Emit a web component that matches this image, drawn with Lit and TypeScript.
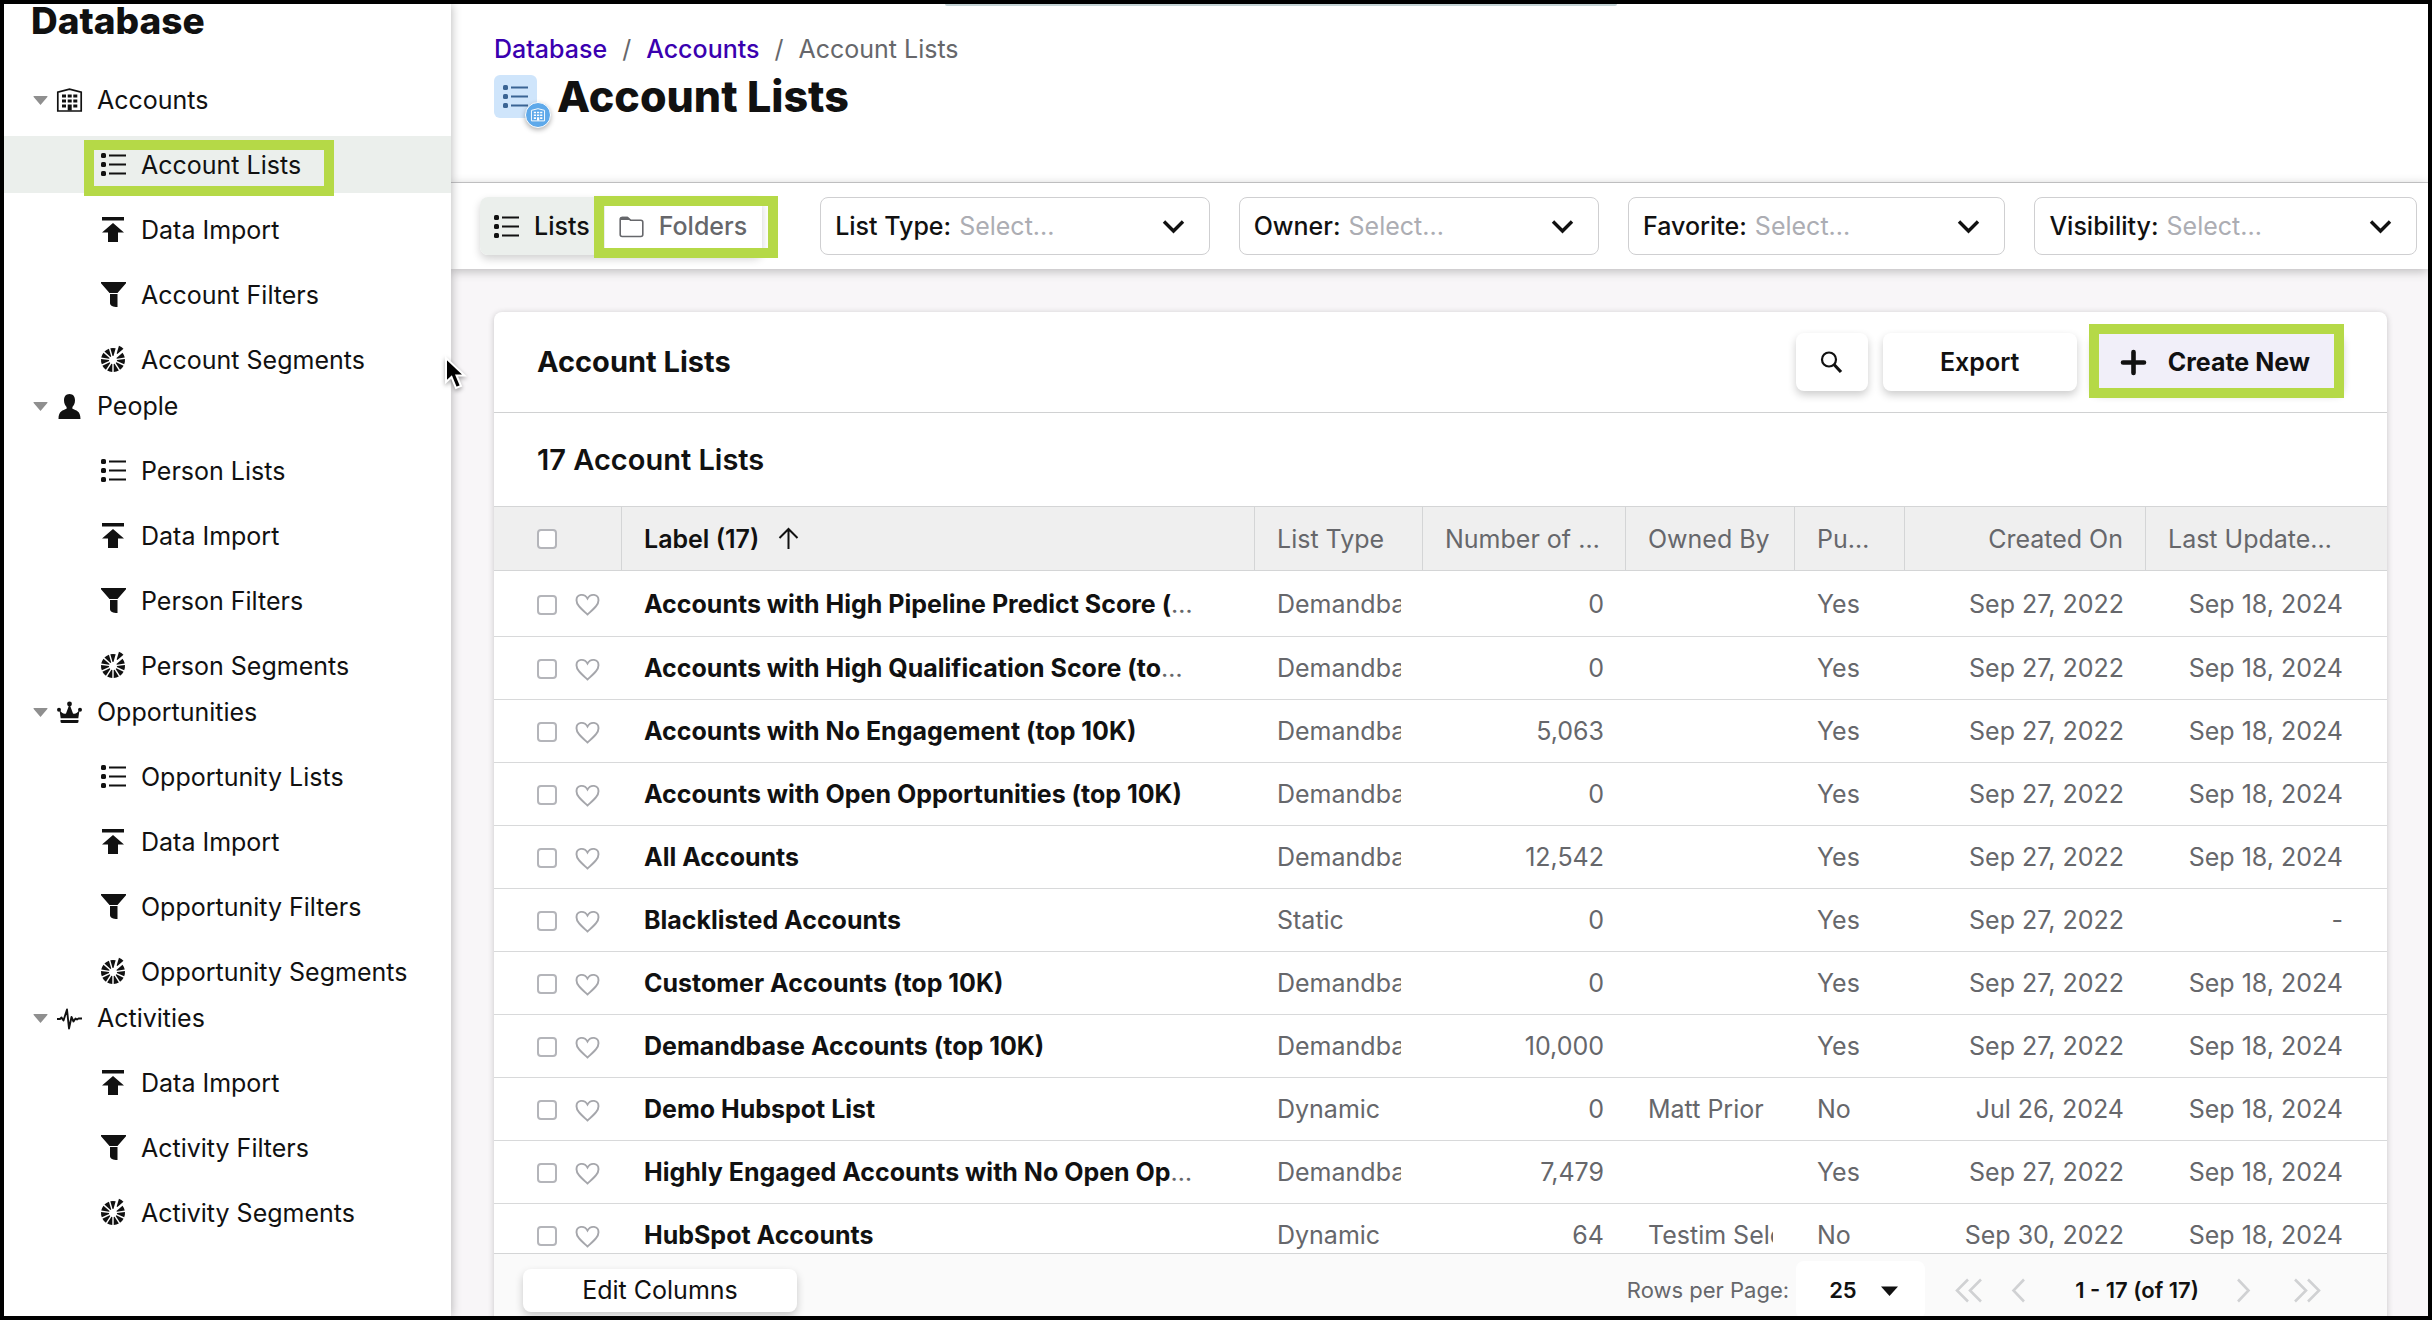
import { LitElement, html, css, svg, nothing } from "lit";
import { customElement, property } from "lit/decorators.js";
import { classMap } from "lit/directives/class-map.js";

type IconName = keyof typeof icons;

const wedges = Array.from({ length: 11 }, (_, i) => {
  const step = (Math.PI * 2) / 11;
  const mid = i * step;
  const half = step / 2 - 0.06;
  const shift = i === 1 ? 3.5 : 0;
  const cx = 12 + Math.sin(mid) * shift;
  const cy = 13 - Math.cos(mid) * shift;
  const point = (r: number, a: number) =>
    `${(cx + r * Math.sin(a)).toFixed(2)} ${(cy - r * Math.cos(a)).toFixed(2)}`;
  return `M${point(4, mid - half / 2)}L${point(12, mid - half)}A12 12 0 0 1 ${point(12, mid + half)}L${point(4, mid + half / 2)}Z`;
}).join("");

const icons = {
  list: svg`<path d="M8 3.5H25M8 12.5H25M8 21.5H25" stroke="currentColor" stroke-width="1.8"/>
    <g fill="currentColor"><rect y="1" width="5" height="5" rx="1.6"/><rect y="10" width="5" height="5" rx="1.6"/><rect y="19" width="5" height="5" rx="1.6"/></g>`,
  upload: svg`<path fill="currentColor" d="M1 0H23V3.5H1ZM12 6L23 15.5H17V25H7V15.5H1Z"/>`,
  funnel: svg`<path fill="currentColor" d="M0 0H25V1.2L16.5 11H8.5L0 1.2ZM9 12H16.5V25C12 25 9 23.6 9 21Z"/>`,
  segments: svg`<path fill="currentColor" d=${wedges}/>`,
  building: svg`<path d="M.8 23V4.2L12.5 1.2L24.2 4.2V23Z" fill="none" stroke="currentColor" stroke-width="1.7"/>
    <path fill="currentColor" d="M5 6.5h4v3H5zM10.7 6.5h4v3h-4zM16.3 6.5h4v3h-4zM5 11.5h4v3H5zM10.7 11.5h4v3h-4zM16.3 11.5h4v3h-4zM5 16.5h4v3H5zM16.3 16.5h4v3h-4zM10.7 16.5h4v6h-4z"/>`,
  person: svg`<path fill="currentColor" d="M12.5 0C16.3 0 18 2.8 18 6.2C18 9.5 16.8 11.6 15.4 13V14.8C19 16.6 23.5 16.8 23.5 25H1.5C1.5 16.8 6 16.6 9.6 14.8V13C8.2 11.6 7 9.5 7 6.2C7 2.8 8.7 0 12.5 0Z"/>`,
  crown: svg`<g fill="currentColor"><circle cx="12.5" cy="4" r="2.4"/><circle cx="2" cy="9.8" r="2"/><circle cx="23" cy="9.8" r="2"/>
    <path d="M12.5 4L16 13.5Q19.5 14.5 22.5 10L21.3 18.3H3.7L2.5 10Q5.5 14.5 9 13.5ZM3.5 20H21.5V21.5Q21.5 23 20 23H5Q3.5 23 3.5 21.5Z"/></g>`,
  pulse: svg`<path d="M0 13H3L4.5 11.5L6.5 14.5L10 3.5L12 22.5L14.5 11L16.5 15.5L18.5 12.5L20 13.5L21.5 12.5H25" fill="none" stroke="currentColor" stroke-width="1.9" stroke-linejoin="round"/>`,
  folder: svg`<path d="M1.2 20V5.5Q1.2 3.5 3 3.5H8.5L11.5 6.2H21.8Q23.8 6.2 23.8 8.2V20.5Q23.8 22.5 21.8 22.5H3.2Q1.2 22.5 1.2 20.5Z" fill="none" stroke="currentColor" stroke-width="1.6"/><path d="M1.2 6V4.5Q1.2 2.8 3 2.8H8.5L11.5 6Z" fill="currentColor"/>`,
  search: svg`<circle cx="10" cy="9.5" r="7" fill="none" stroke="currentColor" stroke-width="2.2"/><path d="M15 14.5L22 22" stroke="currentColor" stroke-width="3.2"/>`,
  plus: svg`<path d="M12.5 2V23M2 12.5H23" stroke="currentColor" stroke-width="4.6" stroke-linecap="round"/>`,
  chevron: svg`<path d="M3 7.5L12.5 17L22 7.5" fill="none" stroke="currentColor" stroke-width="3.4"/>`,
  caret: svg`<path d="M5.5 8H19.5Q19.5 9 18.7 9.8L12.5 17L6.3 9.8Q5.5 9 5.5 8Z" fill="currentColor"/>`,
  triangle: svg`<path d="M4 8.5H21L12.5 18Z" fill="currentColor"/>`,
  arrowUp: svg`<path d="M12.5 23V3M3.5 12L12.5 3L21.5 12" fill="none" stroke="currentColor" stroke-width="2"/>`,
  heart: svg`<path d="M12.5 22.5C6 16.5 1.5 13 1.5 8.2C1.5 1.8 9.5 1 12.5 6.6C15.5 1 23.5 1.8 23.5 8.2C23.5 13 19 16.5 12.5 22.5Z" fill="none" stroke="currentColor" stroke-width="1.9"/>`,
  first: svg`<path d="M12 1.5L1 12.5L12 23.5M25 1.5L14 12.5L25 23.5" fill="none" stroke="currentColor" stroke-width="2.6"/>`,
  prev: svg`<path d="M18 1.5L7.5 12.5L18 23.5" fill="none" stroke="currentColor" stroke-width="2.6"/>`,
  next: svg`<path d="M7 1.5L17.5 12.5L7 23.5" fill="none" stroke="currentColor" stroke-width="2.6"/>`,
  last: svg`<path d="M0 1.5L11 12.5L0 23.5M13 1.5L24 12.5L13 23.5" fill="none" stroke="currentColor" stroke-width="2.6"/>`,
};

@customElement("ui-icon")
export class UiIcon extends LitElement {
  static styles = css`
    :host { display: block; flex: none; width: 25px; height: 25px; }
    svg { display: block; width: 100%; height: 100%; overflow: visible; }
  `;
  @property() name: IconName = "list";
  render() {
    return html`<svg viewBox="0 0 25 25" aria-hidden="true">${icons[this.name]}</svg>`;
  }
}

interface NavGroup { icon: IconName; label: string; items: [IconName, string][]; }

const groupOf = (icon: IconName, label: string, noun: string, lists = true): NavGroup => ({
  icon,
  label,
  items: [
    ...(lists ? [["list", `${noun} Lists`] as [IconName, string]] : []),
    ["upload", "Data Import"],
    ["funnel", `${noun} Filters`],
    ["segments", `${noun} Segments`],
  ],
});

const navGroups: NavGroup[] = [
  groupOf("building", "Accounts", "Account"),
  groupOf("person", "People", "Person"),
  groupOf("crown", "Opportunities", "Opportunity"),
  groupOf("pulse", "Activities", "Activity", false),
];

@customElement("side-nav")
export class SideNav extends LitElement {
  static styles = css`
    :host { display: block; color: #111; font-size: 25px; line-height: 36px; }
    .title { margin: -6px 0 0; padding: 0 27px; font-size: 37px; line-height: 46px; font-weight: 800; }
    .groups { padding-top: 38px; }
    .head { display: flex; align-items: center; gap: 15px; width: 100%; height: 36px; padding: 0 0 0 24px; border: 0; background: none; font: inherit; color: inherit; text-align: left; }
    .head .caret { color: #8f8f8f; margin-right: -11px; }
    .items { list-style: none; margin: 0; padding: 18px 0 0; display: grid; gap: 8px; }
    .item { position: relative; }
    .link { display: flex; align-items: center; gap: 15px; height: 57px; padding-left: 97px; color: inherit; text-decoration: none; }
    .link.active { background: #ebefec; }
    .mark { position: absolute; inset: 4px auto -3px 80px; width: 230px; border: 10px solid #b5d947; pointer-events: none; }
  `;
  render() {
    return html`
      <h2 class="title">Database</h2>
      <nav class="groups" aria-label="Database">
        ${navGroups.map((group) => html`
          <section>
            <button class="head" type="button" aria-expanded="true">
              <ui-icon class="caret" name="caret"></ui-icon>
              <ui-icon name=${group.icon}></ui-icon>
              <span>${group.label}</span>
            </button>
            <ul class="items">
              ${group.items.map(([icon, label]) => {
                const active = label === "Account Lists";
                return html`<li class="item">
                  <a href="#" class=${classMap({ link: true, active })}><ui-icon name=${icon}></ui-icon><span>${label}</span></a>
                  ${active ? html`<span class="mark"></span>` : nothing}
                </li>`;
              })}
            </ul>
          </section>`)}
      </nav>`;
  }
}

@customElement("filter-bar")
export class FilterBar extends LitElement {
  static styles = css`
    :host { display: flex; gap: 29px; padding: 14px 11px 14px 29px; background: #fff; font-size: 25px; line-height: 36px; color: #111; }
    .tabs { position: relative; display: flex; flex: none; margin-right: 29px; border-radius: 8px; box-shadow: 0 4px 8px rgba(0, 0, 0, 0.18); }
    .tab { display: flex; align-items: center; gap: 15px; height: 58px; padding: 0 15px 0 14px; border: 0; border-radius: 0 8px 8px 0; background: #fff; font: inherit; font-weight: 500; color: #66676b; }
    .tab.on { background: #ebefec; color: #111; border-radius: 8px 0 0 8px; }
    .mark { position: absolute; inset: -1px -16px -3px auto; width: 164px; border: 10px solid #b5d947; pointer-events: none; }
    .filter { display: flex; flex: 1 1 auto; align-items: center; box-sizing: border-box; height: 58px; padding-left: 14px; border: 1px solid #cfcfd1; border-radius: 8px; }
    .filter label { font-weight: 500; white-space: nowrap; }
    .pick { display: grid; flex: 1 1 250px; align-items: center; }
    .pick > * { grid-area: 1 / 1; }
    .pick ui-icon { justify-self: end; margin-right: 23px; pointer-events: none; }
    select { appearance: none; width: 100%; height: 56px; padding: 0 56px 0 8px; border: 0; background: none; font: inherit; color: #acadb3; }
  `;
  render() {
    return html`
      <div class="tabs">
        <button class="tab on" type="button"><ui-icon name="list"></ui-icon><span>Lists</span></button>
        <button class="tab" type="button"><ui-icon name="folder"></ui-icon><span>Folders</span></button>
        <span class="mark"></span>
      </div>
      ${["List Type", "Owner", "Favorite", "Visibility"].map((name, i) => html`
        <div class="filter">
          <label for="filter-${i}">${name}:</label>
          <div class="pick">
            <select id="filter-${i}"><option>Select...</option></select>
            <ui-icon name="chevron"></ui-icon>
          </div>
        </div>`)}`;
  }
}

interface Row { label: string; type: string; count: string; owner: string; pub: string; created: string; updated: string; }

const row = (label: string, count: string, extra: Partial<Row> = {}): Row => ({
  label, count, type: "Demandbase", owner: "", pub: "Yes", created: "Sep 27, 2022", updated: "Sep 18, 2024", ...extra,
});

const rows: Row[] = [
  row("Accounts with High Pipeline Predict Score (top 10K)", "0"),
  row("Accounts with High Qualification Score (top 10K)", "0"),
  row("Accounts with No Engagement (top 10K)", "5,063"),
  row("Accounts with Open Opportunities (top 10K)", "0"),
  row("All Accounts", "12,542"),
  row("Blacklisted Accounts", "0", { type: "Static", updated: "-" }),
  row("Customer Accounts (top 10K)", "0"),
  row("Demandbase Accounts (top 10K)", "10,000"),
  row("Demo Hubspot List", "0", { type: "Dynamic", owner: "Matt Prior", pub: "No", created: "Jul 26, 2024" }),
  row("Highly Engaged Accounts with No Open Opportunities", "7,479"),
  row("HubSpot Accounts", "64", { type: "Dynamic", owner: "Testim Sele", pub: "No", created: "Sep 30, 2022" }),
];

@customElement("list-table")
export class ListTable extends LitElement {
  static styles = css`
    :host { display: block; font-size: 25px; line-height: 36px; color: #66676b; }
    table { width: 100%; table-layout: fixed; border-collapse: separate; border-spacing: 0; }
    th { box-sizing: border-box; height: 65px; padding: 0 22px; font-weight: 400; text-align: left; background: #efefef; border: solid #d4d5d6; border-width: 1px 0 1px 1px; }
    th:first-child { border-left: 0; }
    td { box-sizing: border-box; height: 63px; padding: 0 21px 0 23px; border-bottom: 1px solid #d8d9da; }
    tbody tr:first-child td { height: 66px; }
    td:first-child, th:first-child { padding: 0 0 0 43px; }
    td:last-child, th:last-child { padding-right: 44px; }
    .check { width: 127px; }
    .type { width: 168px; }
    .owner { width: 169px; }
    .count { width: 203px; }
    .pub { width: 110px; }
    .created { width: 241px; }
    .updated { width: 242px; }
    .num { text-align: right; }
    .cell { display: block; overflow: hidden; white-space: nowrap; }
    .dots { text-overflow: ellipsis; }
    .name { margin-right: 35px; }
    .name a { font-weight: 700; color: #111; text-decoration: none; }
    .sort { display: flex; align-items: center; gap: 17px; padding: 0; border: 0; background: none; font: inherit; font-weight: 600; color: #111; }
    .tools { display: flex; align-items: center; gap: 18px; }
    input { display: block; appearance: none; box-sizing: border-box; width: 20px; height: 20px; margin: 0; border: 2px solid #b4b5ba; border-radius: 4px; background: #fff; }
    .tools input { margin-top: 2px; }
    .fav { display: block; padding: 2px 0 0; border: 0; background: none; color: #a5a6ab; }
  `;
  render() {
    const heading = (cls: string, text: string, num = false) =>
      html`<th class=${classMap({ [cls]: true, num })} scope="col"><span class="cell dots">${text}</span></th>`;
    return html`
      <table>
        <thead><tr>
          <th class="check" scope="col"><input type="checkbox" aria-label="Select all lists"></th>
          <th scope="col"><button class="sort" type="button">Label (17)<ui-icon name="arrowUp"></ui-icon></button></th>
          ${heading("type", "List Type")}
          ${heading("count", "Number of Accounts", true)}
          ${heading("owner", "Owned By")}
          ${heading("pub", "Public")}
          ${heading("created", "Created On", true)}
          ${heading("updated", "Last Updated On")}
        </tr></thead>
        <tbody>
          ${rows.map((r) => html`<tr>
            <td><span class="tools"><input type="checkbox" aria-label=${r.label}><button class="fav" type="button" aria-label="Favorite"><ui-icon name="heart"></ui-icon></button></span></td>
            <td><span class="cell dots name"><a href="#">${r.label}</a></span></td>
            <td><span class="cell">${r.type}</span></td>
            <td class="num">${r.count}</td>
            <td><span class="cell">${r.owner}</span></td>
            <td>${r.pub}</td>
            <td class="num">${r.created}</td>
            <td class="num">${r.updated}</td>
          </tr>`)}
        </tbody>
      </table>`;
  }
}

@customElement("app-root")
export class AppRoot extends LitElement {
  static styles = css`
    :host { display: block; box-sizing: border-box; height: 100vh; border: 4px solid #000; overflow: hidden; position: relative; background: #f8f6f8; font-family: Inter, "Liberation Sans", sans-serif; font-size: 25px; line-height: 36px; color: #111; }
    .layout { display: grid; grid-template-columns: 447px minmax(0, 1fr); height: 100%; }
    .side { background: #fff; box-shadow: 0 0 10px rgba(0, 0, 0, 0.3); z-index: 2; overflow: hidden; }
    .main { display: flex; flex-direction: column; min-width: 0; min-height: 0; overflow: hidden; }
    .top { position: relative; background: #fff; box-sizing: border-box; height: 179px; padding: 27px 43px 0; border-bottom: 1px solid #cfcfd1; }
    .strip { position: absolute; top: 0; left: 494px; width: 672px; height: 2px; background: #c4d3d6; border-radius: 0 0 8px 8px; }
    .crumbs { display: flex; gap: 15px; color: #66676b; }
    .crumbs a { color: #3a00b0; font-weight: 500; text-decoration: none; }
    .heading { display: flex; align-items: center; gap: 20px; }
    .badge { position: relative; display: grid; place-items: center; width: 43px; height: 43px; border-radius: 6px; background: #cfe5fb; color: #3a6494; }
    .mini { position: absolute; right: -14px; bottom: -10px; display: grid; place-items: center; width: 24px; height: 24px; border: 1px solid #fff; border-radius: 50%; background: #5ea9ea; color: #fff; box-shadow: 0 2px 5px rgba(0, 0, 0, 0.3); }
    .mini ui-icon { width: 14px; height: 14px; }
    h1 { margin: 0; font-size: 43px; line-height: 58px; font-weight: 800; }
    filter-bar { z-index: 1; box-shadow: 0 2px 10px rgba(0, 0, 0, 0.26); }
    .card { display: flex; flex: 1; flex-direction: column; min-height: 0; margin: 43px 41px -10px 43px; border-radius: 8px 8px 0 0; background: #fff; box-shadow: 0 1px 6px rgba(0, 0, 0, 0.2); }
    .bar { display: flex; align-items: center; gap: 15px; box-sizing: border-box; height: 101px; flex: none; padding: 0 44px 0 43px; border-bottom: 1px solid #d0d1d2; }
    h2 { flex: 1; margin: 0; font-size: 29px; line-height: 36px; font-weight: 700; }
    h3 { flex: none; margin: 0; padding: 29px 43px 28px; font-size: 29px; line-height: 36px; font-weight: 600; }
    .btn { position: relative; display: flex; align-items: center; justify-content: center; box-sizing: border-box; height: 58px; border: 0; border-radius: 8px; background: #fff; box-shadow: 0 4px 8px rgba(0, 0, 0, 0.2); font: inherit; font-weight: 600; color: #111; }
    .find { width: 72px; }
    .export { width: 194px; }
    .create { gap: 22px; padding: 0 33px 0 29px; background: #f1eff9; font-weight: 700; }
    .mark { position: absolute; inset: -9px -1px -7px -3px; border: 10px solid #b5d947; pointer-events: none; }
    .rows { flex: 1; min-height: 0; overflow: hidden; }
    .foot { display: flex; align-items: center; flex: none; box-sizing: border-box; height: 73px; padding: 0 67px 0 29px; border-top: 1px solid #d4d5d6; background: #fafafa; font-size: 22px; color: #66676b; }
    .edit { width: 274px; height: 43px; margin-right: auto; font-size: 25px; font-weight: 400; }
    .size { display: grid; align-items: center; width: 129px; margin: 0 31px 0 7px; }
    .size > * { grid-area: 1 / 1; }
    .size ui-icon { justify-self: end; margin-right: 23px; color: #111; pointer-events: none; }
    .size select { appearance: none; height: 58px; padding: 0 33px; border: 0; border-radius: 8px; background: #fff; font: inherit; font-weight: 600; color: #111; }
    .step { display: flex; gap: 25px; }
    .step.ahead { gap: 39px; }
    .page { padding: 5px 0; border: 0; background: none; color: #d0d1d3; }
    .range { margin: 0 32px 0 44px; font-weight: 600; color: #111; }
    .pointer { position: absolute; top: 351px; left: 439px; width: 24px; height: 36px; z-index: 3; filter: drop-shadow(0 2px 2px rgba(0, 0, 0, 0.35)); }
  `;
  render() {
    const pager = (name: IconName, label: string) =>
      html`<button class="page" type="button" aria-label=${label}><ui-icon name=${name}></ui-icon></button>`;
    return html`
      <div class="layout">
        <side-nav class="side"></side-nav>
        <main class="main">
          <header class="top">
            <div class="strip"></div>
            <nav class="crumbs" aria-label="Breadcrumb"><a href="#">Database</a><span>/</span><a href="#">Accounts</a><span>/</span><span>Account Lists</span></nav>
            <div class="heading">
              <div class="badge"><ui-icon name="list"></ui-icon><span class="mini"><ui-icon name="building"></ui-icon></span></div>
              <h1>Account Lists</h1>
            </div>
          </header>
          <filter-bar></filter-bar>
          <section class="card">
            <div class="bar">
              <h2>Account Lists</h2>
              <button class="btn find" type="button" aria-label="Search"><ui-icon name="search"></ui-icon></button>
              <button class="btn export" type="button">Export</button>
              <button class="btn create" type="button"><ui-icon name="plus"></ui-icon>Create New<span class="mark"></span></button>
            </div>
            <h3>17 Account Lists</h3>
            <list-table class="rows"></list-table>
            <footer class="foot">
              <button class="btn edit" type="button">Edit Columns</button>
              <label for="page-size">Rows per Page:</label>
              <div class="size"><select id="page-size"><option>25</option></select><ui-icon name="triangle"></ui-icon></div>
              <div class="step">${pager("first", "First page")}${pager("prev", "Previous page")}</div>
              <span class="range">1 - 17 (of 17)</span>
              <div class="step ahead">${pager("next", "Next page")}${pager("last", "Last page")}</div>
            </footer>
          </section>
        </main>
      </div>
      <svg class="pointer" viewBox="0 0 24 36" aria-hidden="true"><path d="M3 3V27L8.500 22L13 33L18 31L13.500 20.500H21.500Z" fill="#000" stroke="#fff" stroke-width="2"/></svg>`;
  }
}
